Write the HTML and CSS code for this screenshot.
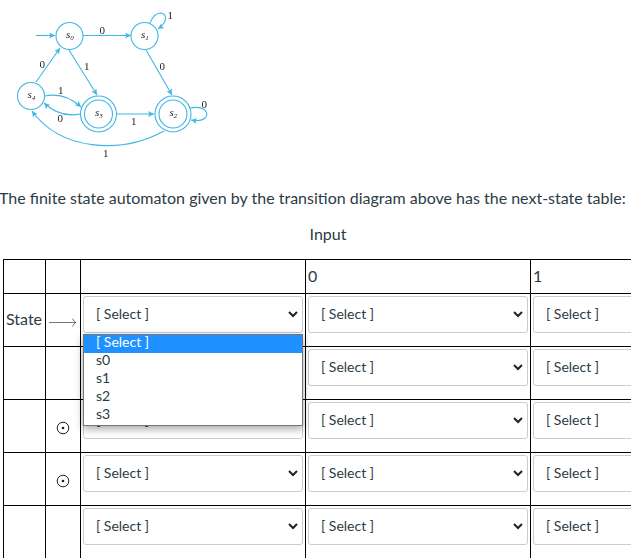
FILE: index.html
```html
<!DOCTYPE html>
<html lang="en">
<head>
    <meta charset="UTF-8">
    <meta name="viewport" content="width=device-width, initial-scale=1.0">
    <title>Next-state table</title>
    <link rel="stylesheet" href="styles.css">
</head>
<body>
    <svg class="diagram" width="240" height="170" viewBox="0 0 240 170">
        <defs>
            <marker id="tip" markerUnits="userSpaceOnUse" markerWidth="7" markerHeight="6" refX="6" refY="3" orient="auto">
                <path d="M0 0L6 3L0 6L1.5 3Z" fill="#3db7e4"/>
            </marker>
        </defs>
        <g class="edges">
            <circle cx="69.5" cy="36" r="13.5"/>
            <circle cx="144.5" cy="36" r="13.5"/>
            <circle cx="31" cy="96" r="13.5"/>
            <circle cx="98.5" cy="114" r="18"/>
            <circle cx="98.5" cy="114" r="14"/>
            <circle cx="173" cy="114" r="18"/>
            <circle cx="173" cy="114" r="14"/>
            <path marker-end="url(#tip)" d="M36 35.5H55"/>
            <path marker-end="url(#tip)" d="M83 35.5H131"/>
            <path marker-end="url(#tip)" d="M150 23C153 15 158 13 161 13C167 14 168 22 158 29"/>
            <path marker-end="url(#tip)" d="M146 50L172 95"/>
            <path marker-end="url(#tip)" d="M69 50L97 95"/>
            <path marker-end="url(#tip)" d="M36 82L60 48"/>
            <path marker-end="url(#tip)" d="M45 96Q65 92 81 107"/>
            <path marker-end="url(#tip)" d="M80 114Q60 118 44 103"/>
            <path marker-end="url(#tip)" d="M117 114H154"/>
            <path marker-end="url(#tip)" d="M190 108C205 105 210 114 205 118C202 121 197 121 191 120"/>
            <path marker-end="url(#tip)" d="M164 131C120 155 60 150 32 111"/>
        </g>
        <g class="names">
            <text x="66" y="38">s<tspan class="sub" dy="1.500">0</tspan></text>
            <text x="141" y="38">s<tspan class="sub" dy="1.500">1</tspan></text>
            <text x="27.500" y="98">s<tspan class="sub" dy="1.500">4</tspan></text>
            <text x="95" y="116">s<tspan class="sub" dy="1.500">3</tspan></text>
            <text x="169.500" y="116">s<tspan class="sub" dy="1.500">2</tspan></text>
        </g>
        <g class="labels">
            <text x="99.500" y="34">0</text>
            <text x="167.500" y="19">1</text>
            <text x="159.500" y="70">0</text>
            <text x="84" y="70">1</text>
            <text x="39.500" y="68">0</text>
            <text x="58" y="94">1</text>
            <text x="57.500" y="122">0</text>
            <text x="131" y="125">1</text>
            <text x="201.500" y="108">0</text>
            <text x="103" y="157">1</text>
        </g>
    </svg>

    <p class="question">The finite state automaton given by the transition diagram above has the next-state table:</p>
    <p class="input-title">Input</p>

    <div class="table-wrap">
        <table class="states">
            <colgroup>
                <col class="c-name"><col class="c-mark"><col class="c-sel"><col class="c-sel"><col class="c-sel">
            </colgroup>
            <tr class="head">
                <td></td>
                <td></td>
                <td></td>
                <td>0</td>
                <td>1</td>
            </tr>
            <tr>
                <td class="name">State</td>
                <td class="mark">
                    <svg width="30" height="12" viewBox="0 0 30 12"><path d="M1 6.500H28M24.500 2.500C25.500 4.500 26.500 5.800 28 6.500C26.500 7.200 25.500 8.500 24.500 10.500" fill="none" stroke="#555" stroke-width="0.8"/></svg>
                </td>
                <td class="sel-cell">
                    <select class="pick"><option>[ Select ]</option></select>
                    <div class="menu">
                        <div class="opt on">[ Select ]</div>
                        <div class="opt">s0</div>
                        <div class="opt">s1</div>
                        <div class="opt">s2</div>
                        <div class="opt">s3</div>
                    </div>
                </td>
                <td class="sel-cell"><select class="pick"><option>[ Select ]</option></select></td>
                <td class="sel-cell"><select class="pick"><option>[ Select ]</option></select></td>
            </tr>
            <tr>
                <td></td>
                <td></td>
                <td class="sel-cell"><select class="pick"><option>[ Select ]</option></select></td>
                <td class="sel-cell"><select class="pick"><option>[ Select ]</option></select></td>
                <td class="sel-cell"><select class="pick"><option>[ Select ]</option></select></td>
            </tr>
            <tr>
                <td></td>
                <td class="mark">
                    <svg width="14" height="14" viewBox="0 0 14 14"><circle cx="7" cy="7" r="5.800" fill="none" stroke="#222" stroke-width="1"/><circle cx="7" cy="7" r="1.300" fill="#222"/></svg>
                </td>
                <td class="sel-cell"><select class="pick"><option>[ Select ]</option></select></td>
                <td class="sel-cell"><select class="pick"><option>[ Select ]</option></select></td>
                <td class="sel-cell"><select class="pick"><option>[ Select ]</option></select></td>
            </tr>
            <tr>
                <td></td>
                <td class="mark">
                    <svg width="14" height="14" viewBox="0 0 14 14"><circle cx="7" cy="7" r="5.800" fill="none" stroke="#222" stroke-width="1"/><circle cx="7" cy="7" r="1.300" fill="#222"/></svg>
                </td>
                <td class="sel-cell"><select class="pick"><option>[ Select ]</option></select></td>
                <td class="sel-cell"><select class="pick"><option>[ Select ]</option></select></td>
                <td class="sel-cell"><select class="pick"><option>[ Select ]</option></select></td>
            </tr>
            <tr>
                <td></td>
                <td></td>
                <td class="sel-cell"><select class="pick"><option>[ Select ]</option></select></td>
                <td class="sel-cell"><select class="pick"><option>[ Select ]</option></select></td>
                <td class="sel-cell"><select class="pick"><option>[ Select ]</option></select></td>
            </tr>
        </table>
    </div>
</body>
</html>
```

FILE: styles.css
```css
html {
    overflow: hidden;
}

body {
    margin: 0;
    padding: 0;
    height: 558px;
    overflow: hidden;
    font-family: "Lato", "Liberation Sans", sans-serif;
    font-size: 16px;
    line-height: 24px;
    color: #2d3b45;
    background-color: #fff;
}

.diagram {
    display: block;
    filter: blur(0.45px);
}

.edges circle,
.edges path {
    fill: none;
    stroke: #3db7e4;
    stroke-width: 1.1;
}

.names text {
    font-family: "Liberation Serif", serif;
    font-style: italic;
    font-size: 11px;
    fill: #222;
}

.names .sub {
    font-size: 7px;
}

.labels text {
    font-family: "Liberation Serif", serif;
    font-size: 11px;
    fill: #222;
}

.question {
    margin: 16px 0 0 -1px;
    white-space: nowrap;
}

.input-title {
    margin: 12px 0 0 0;
    text-align: center;
    padding-left: 22px;
}

.table-wrap {
    margin: 13px 0 0 3px;
    width: 628px;
    height: 300px;
    overflow: hidden;
}

.states {
    border-collapse: collapse;
    table-layout: fixed;
    width: 753px;
}

.c-name {
    width: 42px;
}

.c-mark {
    width: 35px;
}

.c-sel {
    width: 225px;
}

.states td {
    border: 1px solid #000;
    padding: 2px;
    height: 53px;
    box-sizing: border-box;
    vertical-align: middle;
}

.states .head td {
    height: 34px;
    padding: 2px 2px 4px;
}

.states .name {
    padding: 0 2px 2px;
}

.states .mark {
    padding: 4px 0 0 0;
    text-align: center;
}

.mark svg {
    display: block;
    margin: 0 auto;
}

.states .sel-cell {
    position: relative;
    padding: 2px 2px 0;
    vertical-align: top;
}

.pick {
    display: block;
    width: 220px;
    height: 37px;
    padding: 0 30px 2px 12px;
    border: 1px solid #c7cdd1;
    border-radius: 3px;
    box-sizing: border-box;
    appearance: none;
    font-family: inherit;
    font-size: 14px;
    color: #2d3b45;
    background: #fff url("data:image/svg+xml,%3Csvg xmlns='http://www.w3.org/2000/svg' width='10' height='7'%3E%3Cpath d='M1 1l4 4 4-4' fill='none' stroke='%23222' stroke-width='2'/%3E%3C/svg%3E") no-repeat right 4px center;
}

.menu {
    position: absolute;
    left: 2px;
    top: 40px;
    z-index: 2;
    width: 220px;
    height: 92px;
    box-sizing: border-box;
    border: 1px solid #767676;
    background-color: #fff;
    box-shadow: 0 3px 8px rgba(0, 0, 0, 0.35);
    font-size: 14px;
}

.opt {
    height: 18px;
    line-height: 14px;
    padding-left: 12px;
}

.opt.on {
    background-color: #1e90ff;
    color: #fff;
}
```
